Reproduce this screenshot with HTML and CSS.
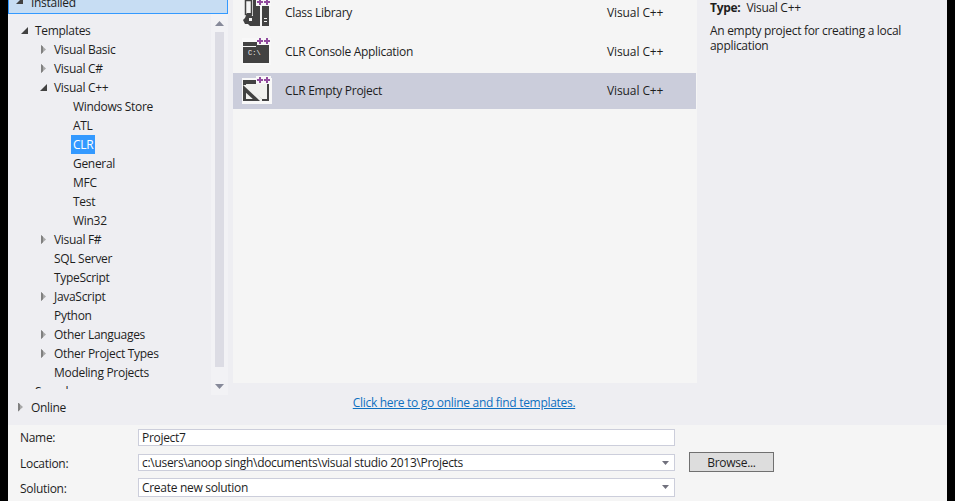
FILE: index.html
```html
<!DOCTYPE html>
<html lang="en">
<head>
<meta charset="utf-8">
<title>New Project</title>
<link rel="stylesheet" href="styles.css">
</head>
<body>
<div class="dialog">
  <div class="main">
    <aside class="nav">
      <div class="installed"><span class="tri open"></span><span class="installed-label">Installed</span></div>
      <div class="tree-wrap">
        <div class="tree">
          <div class="node l0"><span class="tri open"></span>Templates</div>
          <div class="node l1"><span class="tri closed"></span>Visual Basic</div>
          <div class="node l1"><span class="tri closed"></span>Visual C#</div>
          <div class="node l1"><span class="tri open"></span>Visual C++</div>
          <div class="node l2">Windows Store</div>
          <div class="node l2">ATL</div>
          <div class="node l2"><span class="selected">CLR</span></div>
          <div class="node l2">General</div>
          <div class="node l2">MFC</div>
          <div class="node l2">Test</div>
          <div class="node l2">Win32</div>
          <div class="node l1"><span class="tri closed"></span>Visual F#</div>
          <div class="node leaf">SQL Server</div>
          <div class="node leaf">TypeScript</div>
          <div class="node l1"><span class="tri closed"></span>JavaScript</div>
          <div class="node leaf">Python</div>
          <div class="node l1"><span class="tri closed"></span>Other Languages</div>
          <div class="node l1"><span class="tri closed"></span>Other Project Types</div>
          <div class="node leaf">Modeling Projects</div>
          <div class="node samples">Samples</div>
        </div>
        <div class="scrollbar">
          <span class="arrow up"></span>
          <span class="thumb"></span>
          <span class="arrow down"></span>
        </div>
      </div>
      <div class="online"><span class="tri closed"></span>Online</div>
    </aside>
    <section class="center">
      <div class="list">
        <div class="row">
          <svg class="icon" viewBox="0 0 30 30" width="30" height="30">
            <rect x="3.500" y="2.500" width="6" height="14" class="ink-line"/>
            <rect x="11" y="0" width="7" height="28" class="ink"/>
            <rect x="20" y="7" width="7" height="21" class="ink"/>
            <rect x="22" y="20" width="3" height="1" class="cut"/>
            <rect x="22" y="23" width="3" height="1" class="cut"/>
            <path d="M5 15h4l1 3h3l3 3v3l-3 1-1 3H8l-2-2H3l-2-4 2-2z" class="ink"/>
            <rect x="7" y="20" width="3" height="3" class="cut"/>
            <rect x="14" y="0" width="15" height="8" class="halo"/>
            <path class="plus" d="M15 3h2V1h2v2h2v2h-2v2h-2V5h-2zM22 3h2V1h2v2h2v2h-2v2h-2V5h-2z"/>
          </svg>
          <span class="name">Class Library</span><span class="lang">Visual C++</span>
        </div>
        <div class="row">
          <svg class="icon" viewBox="0 0 30 30" width="30" height="30">
            <rect x="0" y="1" width="29" height="27" class="halo"/>
            <path d="M1 5h14v3h12v18H1z" class="ink"/>
            <rect x="1" y="9" width="13" height="1" class="cut"/>
            <path class="plus" d="M15 3h2V1h2v2h2v2h-2v2h-2V5h-2zM22 3h2V1h2v2h2v2h-2v2h-2V5h-2z"/>
            <text x="6" y="18" class="cmd">C:\</text>
          </svg>
          <span class="name">CLR Console Application</span><span class="lang">Visual C++</span>
        </div>
        <div class="row active">
          <svg class="icon" viewBox="0 0 30 30" width="30" height="30">
            <rect x="0" y="2" width="30" height="26" class="halo"/>
            <path d="M1 4h14v3h12v18H1z" class="ink"/>
            <path d="M4 8h21v15H4z" class="pane"/>
            <path d="M1 6l21 19h-9L1 14z" class="ink"/>
            <path d="M1 9l5 0 14 14v2h-2z" class="pane"/>
            <rect x="14" y="0" width="15" height="8" class="halo"/>
            <path class="plus" d="M15 3h2V1h2v2h2v2h-2v2h-2V5h-2zM22 3h2V1h2v2h2v2h-2v2h-2V5h-2z"/>
          </svg>
          <span class="name">CLR Empty Project</span><span class="lang">Visual C++</span>
        </div>
      </div>
      <div class="online-link"><a href="#">Click here to go online and find templates.</a></div>
    </section>
    <aside class="details">
      <p class="type"><b>Type:</b><span>Visual C++</span></p>
      <p class="desc">An empty project for creating a local application</p>
    </aside>
  </div>
  <form class="form">
    <label class="lbl">Name:</label>
    <div class="field">Project7</div>
    <span></span>
    <label class="lbl loc">Location:</label>
    <div class="field combo">c:\users\anoop singh\documents\visual studio 2013\Projects<span class="caret"></span></div>
    <div class="btn">Browse...</div>
    <label class="lbl">Solution:</label>
    <div class="field combo sol">Create new solution<span class="caret"></span></div>
    <span></span>
  </form>
</div>
</body>
</html>
```
FILE: styles.css
```css
* { box-sizing: border-box; }
html, body { margin: 0; height: 100%; overflow: hidden; background: #000; }
body { font: 12px/19px "Open Sans", "Noto Sans", sans-serif; color: #1e1e1e; letter-spacing: -0.3px; }
.dialog { margin: 0 8px; height: 501px; display: flex; flex-direction: column; background: #eeeef2; overflow: hidden; }
.main { height: 425px; display: flex; flex: none; }

.nav { width: 220px; flex: none; display: flex; flex-direction: column; }
.installed { height: 14px; background: #c7ddf3; border: 1px solid #3399ff; border-top: 0; display: flex; align-items: flex-end; padding-left: 7px; overflow: hidden; }
.installed-label { margin-left: 1px; line-height: 19px; margin-bottom: 1px; flex: none; }
.installed .tri { margin-bottom: 9px; }
.tree-wrap { height: 381px; display: flex; }
.tree { flex: 1; height: 375px; padding-top: 7px; overflow: hidden; }
.node { height: 19px; display: flex; align-items: center; white-space: nowrap; flex: none; }
.l0 { padding-left: 13px; }
.l1 { padding-left: 32px; }
.l2 { padding-left: 65px; }
.leaf { padding-left: 46px; }
.samples { padding-left: 27px; }
.selected { background: #3399ff; color: #fff; padding: 0 2px; margin-left: -2px; height: 19px; }

.tri { width: 7px; height: 7px; flex: none; display: inline-block; margin-right: 7px; }
.tri.open { background: #424242; clip-path: polygon(100% 0, 100% 100%, 0 100%); }
.tri.closed { width: 5px; height: 9px; margin-left: 1px; margin-right: 8px; border-left: 2px solid #808080; background: #a8a8a8; clip-path: polygon(0 0, 100% 50%, 0 100%); }

.scrollbar { width: 17px; flex: none; background: #f2f2f5; display: flex; flex-direction: column; align-items: center; padding: 5px 0; }
.arrow { width: 9px; height: 5px; flex: none; background: #868999; }
.arrow.up { clip-path: polygon(50% 0, 100% 100%, 0 100%); margin-top: 2px; }
.arrow.down { clip-path: polygon(0 0, 100% 0, 50% 100%); }
.thumb { width: 9px; height: 335px; margin: 6px 0 17px; background: #dcdce4; flex: none; }

.online { height: 30px; display: flex; align-items: center; padding: 0 0 6px 9px; }
.online .tri { margin-right: 8px; }

.center { width: 464px; flex: none; margin-left: 5px; display: flex; flex-direction: column; }
.list { height: 383px; background: #f5f5f5; overflow: hidden; flex: none; }
.row { height: 36px; margin: 0 1px 3px 0; display: flex; align-items: center; padding-left: 9px; }
.row:first-child { margin-top: -5px; }
.row.active { background: #cbcddb; }
.icon { flex: none; margin-right: 13px; overflow: visible; }
.ink { fill: #424242; }
.ink-line { fill: none; stroke: #424242; stroke-width: 1.5; }
.cut { fill: #f5f5f5; }
.halo { fill: #f8f8f8; }
.pane { fill: #f1f1ef; }
.plus { fill: #914b9e; }
.cmd { font: 7px "Liberation Mono", monospace; fill: #f0f0f0; letter-spacing: 0; }
.name { width: 322px; margin-bottom: 2px; }
.lang { margin-bottom: 2px; letter-spacing: -0.1px; }
.online-link { flex: 1; display: flex; align-items: center; justify-content: center; padding: 0 2px 3px 0; }
.online-link a { color: #0e70c0; text-decoration: underline; }

.details { flex: 1; padding-left: 13px; line-height: 15px; }
.details p { margin: 0; }
.type span { margin-left: 6px; }
.details .desc { margin-top: 8px; width: 215px; }

.form { flex: 1; background: #f5f5f5; display: grid; grid-template-columns: 118px 537px 1fr; grid-template-rows: 17px 18px 19px; row-gap: 7px; padding: 4px 0 0 12px; align-items: end; }
.lbl { line-height: 17px; }
.loc { margin-bottom: -1px; }
.field { background: #fff; border: 1px solid #cccedb; height: 17px; line-height: 15px; padding-left: 3px; position: relative; white-space: nowrap; overflow: hidden; }
.combo { line-height: 16px; }
.sol { height: 19px; line-height: 17px; }
.caret { position: absolute; right: 5px; top: 6px; width: 7px; height: 4px; background: #71717d; clip-path: polygon(0 0, 100% 0, 50% 100%); }
.btn { width: 85px; height: 20px; margin: 0 0 -1px 14px; background: #dddddd; border: 1px solid #707070; text-align: center; line-height: 20px; }
```
